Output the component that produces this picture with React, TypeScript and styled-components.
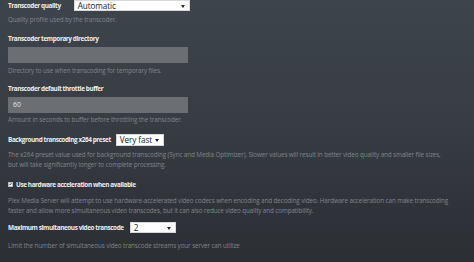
import React from "react";
import styled, { createGlobalStyle } from "styled-components";

const GlobalStyle = createGlobalStyle`
    html, body {
        margin: 0;
        padding: 0;
        height: 262px;
        overflow: hidden;
    }
    body {
        font-family: "Open Sans", "Noto Sans", sans-serif;
        background: #2f3338;
    }
`;

const Page = styled.div`
    width: 474px;
    height: 262px;
    box-sizing: border-box;
    padding: 0 8px;
    background: linear-gradient(180deg, #3e444b 0%, #383d44 45%, #2b2e33 100%);
    overflow: hidden;
`;

const Group = styled.div<{ $gap: number }>`
    display: flex;
    flex-direction: column;
    margin-bottom: ${(p) => p.$gap}px;
`;

const InlineRow = styled.div<{ $h: number; $gap: number }>`
    display: flex;
    align-items: center;
    height: ${(p) => p.$h}px;
    gap: ${(p) => p.$gap}px;
`;

const Label = styled.div`
    font-size: 6.4px;
    font-weight: 700;
    letter-spacing: -0.4px;
    line-height: 10px;
    color: #eeeeee;
    white-space: nowrap;
`;

const Help = styled.div<{ $top: number }>`
    margin-top: ${(p) => p.$top}px;
    font-size: 6.3px;
    letter-spacing: -0.1px;
    line-height: 10px;
    color: #80858b;
    white-space: nowrap;
`;

const Select = styled.div<{ $w: number; $h: number }>`
    position: relative;
    box-sizing: border-box;
    width: ${(p) => p.$w}px;
    height: ${(p) => p.$h}px;
    background: #ffffff;
    border: 1px solid #d8d8d8;
    padding-left: 3px;
    font-size: 8.2px;
    letter-spacing: -0.1px;
    line-height: ${(p) => p.$h - 2}px;
    color: #1a1a1a;
    display: flex;
    align-items: center;
`;

const Caret = styled.span`
    position: absolute;
    right: 4px;
    top: 50%;
    margin-top: -1px;
    border-left: 2px solid transparent;
    border-right: 2px solid transparent;
    border-top: 3px solid #222;
`;

const TextInput = styled.div<{ $top: number }>`
    box-sizing: border-box;
    margin-top: ${(p) => p.$top}px;
    width: 180px;
    height: 16px;
    background: #6b6e72;
    padding-left: 5px;
    font-size: 6.8px;
    line-height: 16px;
    color: #e6e6e6;
`;

const CheckRow = styled.label`
    display: flex;
    align-items: center;
    gap: 3px;
    height: 10px;
    font-size: 6.4px;
    font-weight: 700;
    letter-spacing: -0.4px;
    color: #eeeeee;
    white-space: nowrap;
`;

const Box = styled.span`
    box-sizing: border-box;
    width: 5px;
    height: 5px;
    background: #f2f2f2;
    border: 0.5px solid #bdbdbd;
    display: flex;
    align-items: center;
    justify-content: center;
`;

function Dropdown({ value, w, h }: { value: string; w: number; h: number }) {
    return (
        <Select $w={w} $h={h}>
            {value}
            <Caret />
        </Select>
    );
}

export default function App() {
    return (
        <>
            <GlobalStyle />
            <Page>
                <Group $gap={9}>
                    <InlineRow $h={11} $gap={13}>
                        <Label>Transcoder quality</Label>
                        <Dropdown value="Automatic" w={116} h={11} />
                    </InlineRow>
                    <Help $top={4}>Quality profile used by the transcoder.</Help>
                </Group>

                <Group $gap={8}>
                    <Label>Transcoder temporary directory</Label>
                    <TextInput $top={3} />
                    <Help $top={3}>Directory to use when transcoding for temporary files.</Help>
                </Group>

                <Group $gap={9}>
                    <Label>Transcoder default throttle buffer</Label>
                    <TextInput $top={3}>60</TextInput>
                    <Help $top={2}>Amount in seconds to buffer before throttling the transcoder.</Help>
                </Group>

                <Group $gap={9}>
                    <InlineRow $h={12} $gap={5}>
                        <Label>Background transcoding x264 preset</Label>
                        <Dropdown value="Very fast" w={48} h={12} />
                    </InlineRow>
                    <Help $top={4}>
                        The x264 preset value used for background transcoding (Sync and Media
                        Optimizer). Slower values will result in better video quality and smaller
                        file sizes,
                    </Help>
                    <Help $top={0}>but will take significantly longer to complete processing.</Help>
                </Group>

                <Group $gap={6}>
                    <CheckRow>
                        <Box>
                            <svg width="4" height="4" viewBox="0 0 4 4">
                                <path d="M0.5 2 L1.6 3.2 L3.5 0.6" stroke="#222" strokeWidth="0.9" fill="none" />
                            </svg>
                        </Box>
                        Use hardware acceleration when available
                    </CheckRow>
                    <Help $top={7}>
                        Plex Media Server will attempt to use hardware-accelerated video codecs when
                        encoding and decoding video. Hardware acceleration can make transcoding
                    </Help>
                    <Help $top={0}>
                        faster and allow more simultaneous video transcodes, but it can also reduce
                        video quality and compatibility.
                    </Help>
                </Group>

                <Group $gap={0}>
                    <InlineRow $h={11} $gap={6}>
                        <Label>Maximum simultaneous video transcode</Label>
                        <Dropdown value="2" w={46} h={11} />
                    </InlineRow>
                    <Help $top={8}>
                        Limit the number of simultaneous video transcode streams your server can
                        utilize
                    </Help>
                </Group>
            </Page>
        </>
    );
}
